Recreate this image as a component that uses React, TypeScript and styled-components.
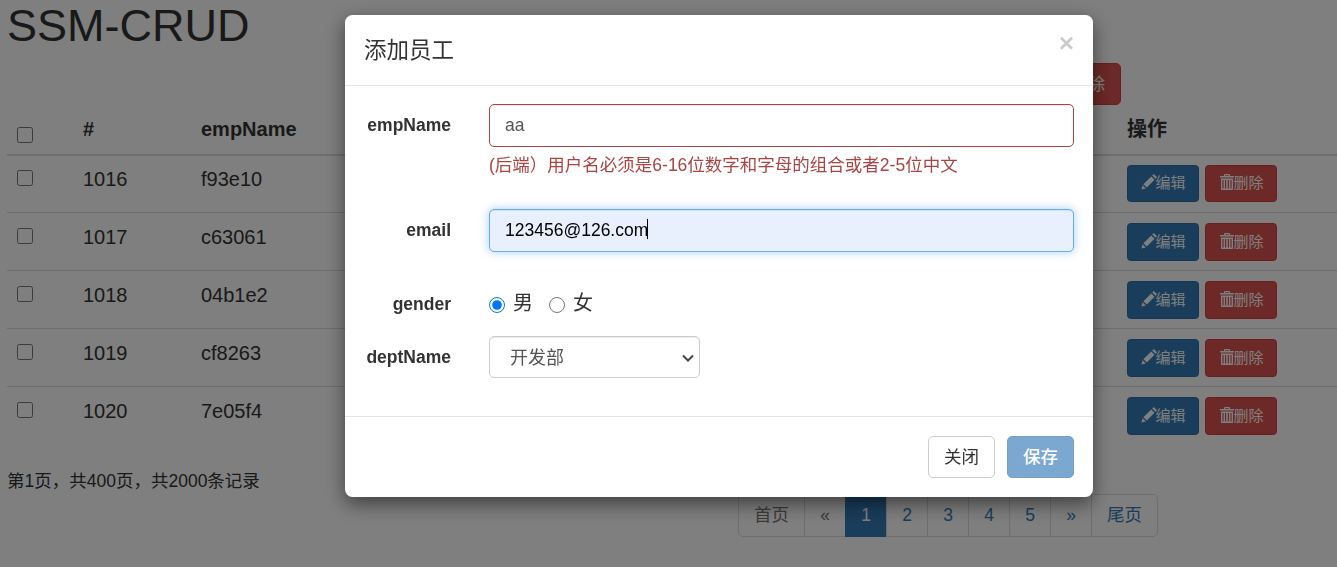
import styled, { createGlobalStyle } from "styled-components"

const GlobalStyle = createGlobalStyle`
  html, body {
    margin: 0;
    height: 100%;
    overflow: hidden;
    background: #fff;
  }
  body {
    font-family: "Liberation Sans", "Noto Sans CJK SC", sans-serif;
    font-size: 17.5px;
    line-height: 25px;
    color: #333;
  }
  * {
    box-sizing: border-box;
  }
`

const Page = styled.div`
  padding-left: 7px;
`

const Heading = styled.h1`
  margin: 0;
  padding-top: 1px;
  font-size: 45px;
  font-weight: 400;
  line-height: 49.5px;
  color: #333;
`

const Toolbar = styled.div`
  display: flex;
  justify-content: flex-end;
  margin-top: 12.5px;
  padding-right: 216px;
`

const Button = styled.button<{ $variant?: "primary" | "danger" | "default"; $disabled?: boolean }>`
  display: inline-flex;
  align-items: center;
  height: 42px;
  padding: 0 15px;
  font: inherit;
  font-weight: ${(p) => (p.$disabled ? 500 : 400)};
  border: 1px solid
    ${(p) => (p.$variant === "primary" ? "#2e6da4" : p.$variant === "danger" ? "#d43f3a" : "#ccc")};
  border-radius: 5px;
  color: ${(p) => (p.$variant === "default" || !p.$variant ? "#333" : "#fff")};
  background: ${(p) => (p.$variant === "primary" ? "#337ab7" : p.$variant === "danger" ? "#d9534f" : "#fff")};
  opacity: ${(p) => (p.$disabled ? 0.65 : 1)};
`

const SmallButton = styled(Button)`
  height: 37.5px;
  padding: 0 12.5px;
  font-size: 15px;
  line-height: 22px;
  border-radius: 3.75px;
`

const Table = styled.table`
  width: 100%;
  margin-top: 1.5px;
  border-collapse: collapse;
  table-layout: fixed;
  font-size: 20px;
  line-height: 28px;
`

const HeadCell = styled.th`
  height: 46px;
  padding: 8px 10px 11px;
  text-align: left;
  vertical-align: bottom;
  font-weight: 700;
  border-bottom: 2.5px solid #ddd;
`

const Row = styled.tr`
  height: 58px;

  &:first-child td {
    padding-top: 9px;
  }
`

const Cell = styled.td`
  padding: 10px 10px 0;
  vertical-align: top;
  border-top: 1px solid #ddd;
`

const Tick = styled.input.attrs({ type: "checkbox" })`
  display: block;
  width: 16px;
  height: 16px;
  margin: 5px 0 0;
`

const HeadTick = styled(Tick)`
  margin: 0;
`

const Actions = styled.div`
  display: flex;
  gap: 6px;
`

const ActionIcon = styled.svg`
  width: 16px;
  height: 16px;
  flex: none;
  fill: currentColor;
  margin: -2px -1px 0 0;
`

const Foot = styled.div`
  display: flex;
  margin-top: 24px;
`

const Summary = styled.div`
  width: 731px;
`

const Pagination = styled.ul`
  display: flex;
  margin: 25px 0 0;
  padding: 0;
  list-style: none;
`

const PageItem = styled.li<{ $active?: boolean; $muted?: boolean }>`
  height: 43px;
  min-width: 42px;
  margin-left: -1px;
  padding: 8px 15px;
  text-align: center;
  border: 1px solid ${(p) => (p.$active ? "#337ab7" : "#ddd")};
  color: ${(p) => (p.$active ? "#fff" : p.$muted ? "#777" : "#337ab7")};
  background: ${(p) => (p.$active ? "#337ab7" : "#fff")};

  &:first-child {
    margin-left: 0;
    border-radius: 5px 0 0 5px;
  }

  &:last-child {
    border-radius: 0 5px 5px 0;
  }
`

const Backdrop = styled.div`
  position: fixed;
  inset: 0;
  background: rgba(0, 0, 0, 0.5);
`

const Modal = styled.div`
  position: fixed;
  top: 15px;
  left: 345px;
  width: 748px;
  background: #fff;
  border-radius: 7.5px;
  box-shadow: 0 6.25px 18.75px rgba(0, 0, 0, 0.5);
`

const ModalHeader = styled.div`
  display: flex;
  justify-content: space-between;
  align-items: flex-start;
  height: 70.5px;
  padding: 20px 19px 0;
  border-bottom: 1px solid #e5e5e5;
`

const ModalTitle = styled.h4`
  margin: 0;
  font-size: 22.5px;
  font-weight: 400;
  line-height: 32px;
`

const Close = styled.span`
  margin-top: -5px;
  font-size: 26.25px;
  font-weight: 700;
  line-height: 26px;
  color: #000;
  opacity: 0.2;
  text-shadow: 0 1px 0 #fff;
`

const Form = styled.form`
  display: flex;
  flex-direction: column;
  gap: 18.75px;
  padding: 18.75px 19px 38px;
`

const FormRow = styled.div`
  display: grid;
  grid-template-columns: 87px 1fr;
  column-gap: 38px;
`

const FieldLabel = styled.label<{ $flush?: boolean }>`
  padding-top: ${(p) => (p.$flush ? "3px" : "8.5px")};
  text-align: right;
  font-weight: 700;
`

const FieldWrap = styled.div`
  position: relative;
  display: flex;
  flex-direction: column;
`

const TextField = styled.input<{ $error?: boolean; $focused?: boolean }>`
  display: block;
  width: 100%;
  height: 42.5px;
  padding: 7.5px 15px;
  font: inherit;
  color: ${(p) => (p.$focused ? "#000" : "#555")};
  background: ${(p) => (p.$focused ? "#e8f0fe" : "#fff")};
  border: 1px solid ${(p) => (p.$error ? "#a94442" : p.$focused ? "#66afe9" : "#ccc")};
  border-radius: 5px;
  outline: none;
  box-shadow: inset 0 1px 1px rgba(0, 0, 0, 0.075)
    ${(p) => (p.$focused ? ", 0 0 10px rgba(102, 175, 233, 0.6)" : "")};
`

const TextCaret = styled.span`
  position: absolute;
  top: 10px;
  left: 158px;
  width: 1px;
  height: 20px;
  background: #000;
`

const HelpText = styled.span`
  display: block;
  margin-top: 6.25px;
  margin-bottom: 12.5px;
  color: #a94442;
`

const RadioGroup = styled.div`
  display: flex;
  align-items: center;
  height: 27px;
  padding-top: 2px;
  gap: 16px;
  font-size: 20px;
`

const RadioLabel = styled.label`
  display: flex;
  align-items: center;
  gap: 8px;
`

const Radio = styled.input.attrs({ type: "radio", name: "gender" })`
  width: 16px;
  height: 16px;
  margin: 2px 0 0;
`

const SelectWrap = styled.div`
  position: relative;
  width: 211px;
`

const DeptSelect = styled.select`
  display: block;
  width: 100%;
  height: 42px;
  padding: 8px 15px 6px 20px;
  font: inherit;
  font-size: 18px;
  color: #555;
  background: #fff;
  border: 1px solid #ccc;
  border-radius: 5px;
  box-shadow: inset 0 1px 1px rgba(0, 0, 0, 0.075);
  appearance: none;
`

const SelectChevron = styled.svg`
  position: absolute;
  top: 18px;
  right: 6px;
  width: 12px;
  height: 8px;
  fill: none;
  stroke: #444;
  stroke-width: 2;
  pointer-events: none;
`

const ModalFooter = styled.div`
  display: flex;
  justify-content: flex-end;
  gap: 12px;
  padding: 19px 19px 18.5px;
  border-top: 1px solid #e5e5e5;
`

const PencilIcon = () => (
  <ActionIcon viewBox="0 0 16 16">
    <path d="M.4 15.600 1.600 11.200 4.800 14.400Z" />
    <path d="M2.400 10.200 10.200 2.400 13.600 5.800 5.800 13.600Z" />
    <path d="M11.200 1.400 12.200.4a.8.8 0 0 1 1.100 0l2.300 2.300a.8.8 0 0 1 0 1.100L14.600 4.800Z" />
  </ActionIcon>
)

const TrashIcon = () => (
  <ActionIcon viewBox="0 0 16 16">
    <path
      d="M5 1.200C5 .5 5.500 0 6.200 0h3.600c.7 0 1.200.5 1.200 1.200V2h4v1.600H1V2h4Zm1.200.8h3.600v-.8H6.200Z"
      fillRule="evenodd"
    />
    <path
      d="M2 4.600h12V15c0 .6-.4 1-1 1H3c-.6 0-1-.4-1-1ZM3.400 6v8.600h1.200V6Zm2.600 0v8.600h1.200V6Zm2.800 0v8.600H10V6Zm2.600 0v8.600h1.200V6Z"
      fillRule="evenodd"
    />
  </ActionIcon>
)

const employees = [
  { id: 1016, name: "f93e10" },
  { id: 1017, name: "c63061" },
  { id: 1018, name: "04b1e2" },
  { id: 1019, name: "cf8263" },
  { id: 1020, name: "7e05f4" },
]

const pages = ["2", "3", "4", "5"]

const App = () => {
  return (
    <>
      <GlobalStyle />
      <Page>
        <Heading>SSM-CRUD</Heading>
        <Toolbar>
          <Button $variant="danger">删除</Button>
        </Toolbar>
        <Table>
          <colgroup>
            <col width={66} />
            <col width={118} />
            <col />
            <col width={220} />
          </colgroup>
          <thead>
            <tr>
              <HeadCell>
                <HeadTick />
              </HeadCell>
              <HeadCell>#</HeadCell>
              <HeadCell>empName</HeadCell>
              <HeadCell>操作</HeadCell>
            </tr>
          </thead>
          <tbody>
            {employees.map((emp) => (
              <Row key={emp.id}>
                <Cell>
                  <Tick />
                </Cell>
                <Cell>{emp.id}</Cell>
                <Cell>{emp.name}</Cell>
                <Cell>
                  <Actions>
                    <SmallButton $variant="primary">
                      <PencilIcon />
                      编辑
                    </SmallButton>
                    <SmallButton $variant="danger">
                      <TrashIcon />
                      删除
                    </SmallButton>
                  </Actions>
                </Cell>
              </Row>
            ))}
          </tbody>
        </Table>
        <Foot>
          <Summary>第1页，共400页，共2000条记录</Summary>
          <Pagination>
            <PageItem $muted>首页</PageItem>
            <PageItem $muted>«</PageItem>
            <PageItem $active>1</PageItem>
            {pages.map((n) => (
              <PageItem key={n}>{n}</PageItem>
            ))}
            <PageItem>»</PageItem>
            <PageItem>尾页</PageItem>
          </Pagination>
        </Foot>
      </Page>
      <Backdrop />
      <Modal>
        <ModalHeader>
          <ModalTitle>添加员工</ModalTitle>
          <Close>×</Close>
        </ModalHeader>
        <Form>
          <FormRow>
            <FieldLabel>empName</FieldLabel>
            <FieldWrap>
              <TextField $error value="aa" readOnly />
              <HelpText>(后端）用户名必须是6-16位数字和字母的组合或者2-5位中文</HelpText>
            </FieldWrap>
          </FormRow>
          <FormRow>
            <FieldLabel>email</FieldLabel>
            <FieldWrap>
              <TextField $focused value="123456@126.com" readOnly />
              <TextCaret />
              <HelpText />
            </FieldWrap>
          </FormRow>
          <FormRow>
            <FieldLabel $flush>gender</FieldLabel>
            <RadioGroup>
              <RadioLabel>
                <Radio defaultChecked />男
              </RadioLabel>
              <RadioLabel>
                <Radio />女
              </RadioLabel>
            </RadioGroup>
          </FormRow>
          <FormRow>
            <FieldLabel>deptName</FieldLabel>
            <SelectWrap>
              <DeptSelect>
                <option>开发部</option>
              </DeptSelect>
              <SelectChevron viewBox="0 0 12 8">
                <path d="M1 1.500 6 6.500 11 1.500" />
              </SelectChevron>
            </SelectWrap>
          </FormRow>
        </Form>
        <ModalFooter>
          <Button $variant="default">关闭</Button>
          <Button $variant="primary" $disabled>
            保存
          </Button>
        </ModalFooter>
      </Modal>
    </>
  )
}

export default App
